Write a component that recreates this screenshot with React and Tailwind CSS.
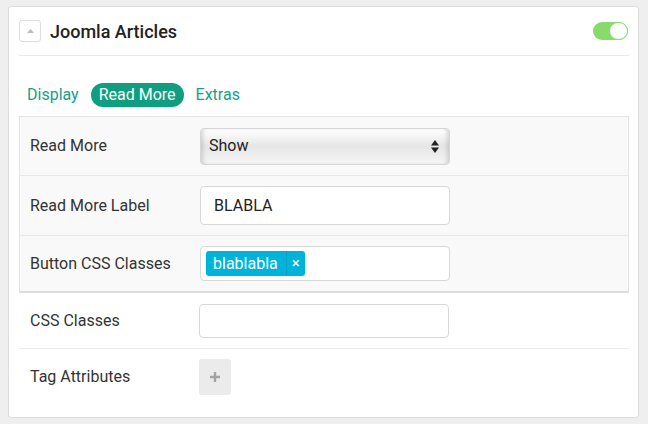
import { useState } from "react";

function Toggle({ on }) {
  return (
    <div
      className={
        "w-[35px] h-[18px] rounded-full flex items-center justify-end " +
        (on ? "bg-[#88db6a]" : "bg-[#ddd]")
      }
    >
      <div className="w-[19px] h-[18px] rounded-full bg-white border border-[#88db6a]" />
    </div>
  );
}

function Row({ label, children, className }) {
  return (
    <div className={"flex items-center " + className}>
      <div className="w-[180px] pl-[10px] text-[16px] text-[#333]">{label}</div>
      <div className="flex-1">{children}</div>
    </div>
  );
}

export default function App() {
  const [tab, setTab] = useState("Read More");
  const [label, setLabel] = useState("BLABLA");
  const [css, setCss] = useState("");

  const tabs = ["Display", "Read More", "Extras"];

  return (
    <div
      className="min-h-screen bg-[#efefef] pl-[8px] pr-[9px] pt-[6px] pb-[7px]"
      style={{ fontFamily: "Roboto, 'Noto Sans', sans-serif" }}
    >
      <div className="bg-white border border-[#dcdcdc] rounded-[3px] pl-[10px] pr-[9px] pb-[12px]">
        {/* header */}
        <div className="h-[49px] flex items-center border-b border-[#e8e8e8]">
          <button className="w-[22px] h-[22px] border border-[#dddddd] rounded-[3px] flex items-center justify-center">
            <svg width="7" height="4" viewBox="0 0 7 4">
              <path d="M0 4 L3.5 0 L7 4 Z" fill="#bbbbbb" />
            </svg>
          </button>
          <div className="ml-[9px] text-[18px] font-medium text-[#222]">Joomla Articles</div>
          <div className="ml-auto mr-px">
            <Toggle on />
          </div>
        </div>

        {/* tabs */}
        <div className="mt-[27px] flex gap-[4px] h-[24px]">
          {tabs.map((t) => (
            <button
              key={t}
              onClick={() => setTab(t)}
              className={
                "px-[8px] h-[24px] rounded-full text-[16px] leading-[24px] " +
                (tab === t ? "bg-[#0f9f80] text-white" : "text-[#16a085]")
              }
            >
              {t}
            </button>
          ))}
        </div>

        {/* tab settings */}
        <div className="mt-[9px] border border-[#e5e5e5] border-b-2 border-b-[#dcdcdc] bg-[#f9f9f9]">
          <Row label="Read More" className="h-[59px] border-b border-[#e8e8e8]">
            <div
              className="w-[250px] h-[37px] rounded-[4px] border border-[#d6d6d6] flex items-center pl-[8px] pr-[10px] text-[16px] text-[#222] bg-gradient-to-b from-[#ffffff] via-[#e6e6e6] to-[#f6f6f6] shadow-[inset_4px_0_4px_-2px_rgba(0,0,0,0.14),inset_-4px_0_4px_-2px_rgba(0,0,0,0.14)]"
            >
              <span>Show</span>
              <svg className="ml-auto" width="8" height="13" viewBox="0 0 8 13">
                <path d="M0 5.5 L4 0 L8 5.5 Z" fill="#222" />
                <path d="M0 7.5 L4 13 L8 7.5 Z" fill="#222" />
              </svg>
            </div>
          </Row>
          <Row label="Read More Label" className="h-[60px] border-b border-[#e8e8e8]">
            <input
              value={label}
              onChange={(e) => setLabel(e.target.value)}
              className="w-[250px] h-[39px] rounded-[4px] border border-[#d8d8d8] bg-white px-[13px] text-[16px] text-[#222] outline-none"
            />
          </Row>
          <Row label="Button CSS Classes" className="h-[55px]">
            <div className="w-[250px] h-[35px] rounded-[4px] border border-[#d8d8d8] bg-white flex items-center px-[5px]">
              <span className="h-[25px] rounded-[3px] bg-[#00b4d9] text-white flex items-center text-[16px]">
                <span className="pl-[7px] pr-[8px]">blablabla</span>
                <span className="h-full border-l border-[#0aa0c2] px-[5px] flex items-center text-[15px]">×</span>
              </span>
            </div>
          </Row>
        </div>

        {/* general settings */}
        <div className="flex items-center h-[56px] border-b border-[#ececec]">
          <div className="w-[180px] pl-[11px] text-[16px] text-[#333]">CSS Classes</div>
          <input
            value={css}
            onChange={(e) => setCss(e.target.value)}
            className="w-[250px] h-[34px] rounded-[4px] border border-[#d8d8d8] bg-white px-[12px] text-[16px] outline-none"
          />
        </div>
        <div className="flex items-center h-[56px]">
          <div className="w-[180px] pl-[11px] text-[16px] text-[#333]">Tag Attributes</div>
          <button className="w-[32px] h-[36px] rounded-[3px] bg-[#ebebeb] flex items-center justify-center">
            <svg width="10" height="10" viewBox="0 0 10 10">
              <path d="M3.8 0 H6.2 V3.8 H10 V6.2 H6.2 V10 H3.8 V6.2 H0 V3.8 H3.8 Z" fill="#a3a3a3" />
            </svg>
          </button>
        </div>
      </div>
    </div>
  );
}
